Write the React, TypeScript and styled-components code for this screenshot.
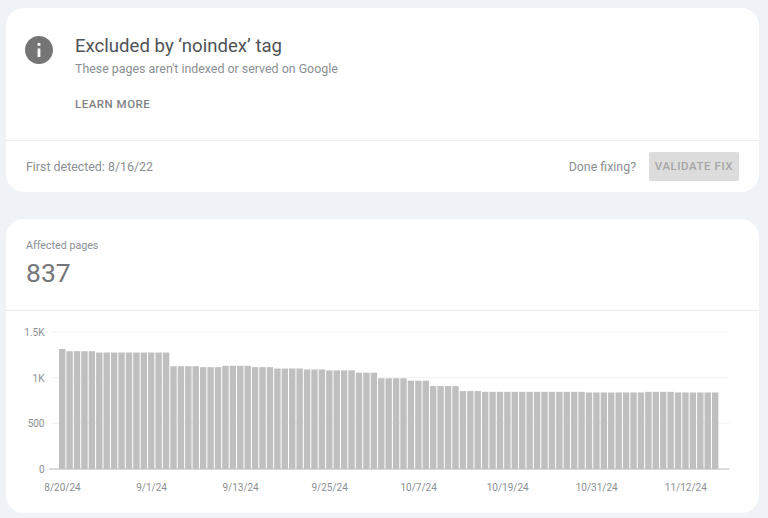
import React from 'react';
import styled, { createGlobalStyle } from 'styled-components';

const GlobalStyle = createGlobalStyle`
  html, body {
    margin: 0;
    padding: 0;
    background: #eff3f7;
    font-family: Roboto, "Liberation Sans", sans-serif;
  }
`;

// one run of equal bars per entry: [how many days, pages]
const RUNS: [number, number][] = [
  [1, 1315], [4, 1290], [10, 1275], [4, 1125], [3, 1115], [4, 1130], [3, 1115],
  [4, 1100], [3, 1090], [4, 1080], [3, 1055], [4, 993], [3, 967], [4, 908],
  [3, 853], [14, 845], [8, 838], [4, 845], [6, 838],
];
const VALUES = RUNS.flatMap(([count, value]) => Array<number>(count).fill(value));

const TICKS_X = ['8/20/24', '9/1/24', '9/13/24', '9/25/24', '10/7/24', '10/19/24', '10/31/24', '11/12/24'];
const TICKS_Y: [string, number][] = [['1.5K', 1500], ['1K', 1000], ['500', 500], ['0', 0]];

const BASE_Y = 158;
const PX_PER_PAGE = 137 / 1500;
const BAR_STEP = 7.42;
const BAR_LEFT = 59;

const InfoIcon = () => (
  <InfoSvg viewBox="2 2 20 20">
    <path
      fill="#757575"
      d="M12 2C6.48 2 2 6.48 2 12s4.48 10 10 10 10-4.48 10-10S17.52 2 12 2zm1 15h-2v-6h2v6zm0-8h-2V7h2v2z"
    />
  </InfoSvg>
);

const PagesChart = () => (
  <ChartSvg viewBox="0 0 753 202" width="753" height="202">
    {TICKS_Y.map(([label, value]) => {
      const y = BASE_Y - value * PX_PER_PAGE;
      return (
        <g key={label}>
          <line x1={value === 0 ? 43 : 46} x2="723.5" y1={y} y2={y} stroke={value === 0 ? '#b8b8b8' : '#f2f2f2'} />
          <AxisText x="38.5" y={y + 4} textAnchor="end">
            {label}
          </AxisText>
        </g>
      );
    })}
    {VALUES.map((value, i) => (
      <rect
        key={i}
        x={BAR_LEFT - 6 + i * BAR_STEP}
        y={BASE_Y - value * PX_PER_PAGE}
        width={6.4}
        height={value * PX_PER_PAGE}
        fill="#bfbfbf"
      />
    ))}
    {TICKS_X.map((label, i) => (
      <AxisText key={label} x={56.5 + i * 12 * BAR_STEP} y="179.5" textAnchor="middle">
        {label}
      </AxisText>
    ))}
  </ChartSvg>
);

export default function App() {
  return (
    <Page>
      <GlobalStyle />
      <Card>
        <Summary>
          <InfoIcon />
          <SummaryText>
            <Title>Excluded by ‘noindex’ tag</Title>
            <Subtitle>These pages aren't indexed or served on Google</Subtitle>
            <LearnMore>LEARN MORE</LearnMore>
          </SummaryText>
        </Summary>
        <Footer>
          <Muted>First detected: 8/16/22</Muted>
          <FixGroup>
            <Muted>Done fixing?</Muted>
            <ValidateButton disabled>VALIDATE FIX</ValidateButton>
          </FixGroup>
        </Footer>
      </Card>
      <Card>
        <Stat>
          <StatLabel>Affected pages</StatLabel>
          <StatValue>837</StatValue>
        </Stat>
        <PagesChart />
      </Card>
    </Page>
  );
}

const Page = styled.div`
  width: 768px;
  height: 518px;
  box-sizing: border-box;
  padding: 8px 9px 0 6px;
  display: flex;
  flex-direction: column;
  gap: 27px;
  overflow: hidden;
`;

const Card = styled.section`
  background: #ffffff;
  border-radius: 18px;
  overflow: hidden;
`;

const Summary = styled.div`
  height: 133px;
  box-sizing: border-box;
  padding: 28px 20px 0 19px;
  display: flex;
  gap: 22px;
  border-bottom: 1px solid #ebebeb;
`;

const InfoSvg = styled.svg`
  width: 28px;
  height: 28px;
  flex: none;
`;

const SummaryText = styled.div`
  display: flex;
  flex-direction: column;
  align-items: flex-start;
`;

const Title = styled.h1`
  margin: 0;
  font-size: 18.6px;
  font-weight: 400;
  line-height: 20px;
  color: #505356;
`;

const Subtitle = styled.p`
  margin: 5px 0 0;
  font-size: 12.4px;
  line-height: 16px;
  color: #8b8f93;
`;

const LearnMore = styled.a`
  margin-top: 19px;
  font-size: 11.5px;
  font-weight: 500;
  line-height: 16px;
  letter-spacing: 0.5px;
  color: #808285;
`;

const Footer = styled.div`
  height: 51px;
  box-sizing: border-box;
  padding: 0 20px;
  display: flex;
  align-items: center;
  justify-content: space-between;
`;

const FixGroup = styled.div`
  display: flex;
  align-items: center;
  gap: 13px;
`;

const Muted = styled.span`
  font-size: 12.4px;
  color: #8b8f93;
`;

const ValidateButton = styled.button`
  width: 90px;
  height: 29px;
  margin-top: -1px;
  padding: 0;
  border: 0;
  border-radius: 2px;
  background: #dcdcdc;
  font-family: inherit;
  font-size: 11.5px;
  font-weight: 500;
  letter-spacing: 0.55px;
  color: #a6a6a6;
`;

const Stat = styled.div`
  height: 92px;
  box-sizing: border-box;
  padding: 20px 20px 0;
  border-bottom: 1px solid #ebebeb;
`;

const StatLabel = styled.div`
  font-size: 10.7px;
  line-height: 14px;
  color: #8b8f93;
`;

const StatValue = styled.div`
  margin-top: 5px;
  font-size: 26.5px;
  line-height: 30px;
  color: #747679;
`;

const ChartSvg = styled.svg`
  display: block;
`;

const AxisText = styled.text`
  font-family: Roboto, "Liberation Sans", sans-serif;
  font-size: 10px;
  fill: #8b8f93;
`;
